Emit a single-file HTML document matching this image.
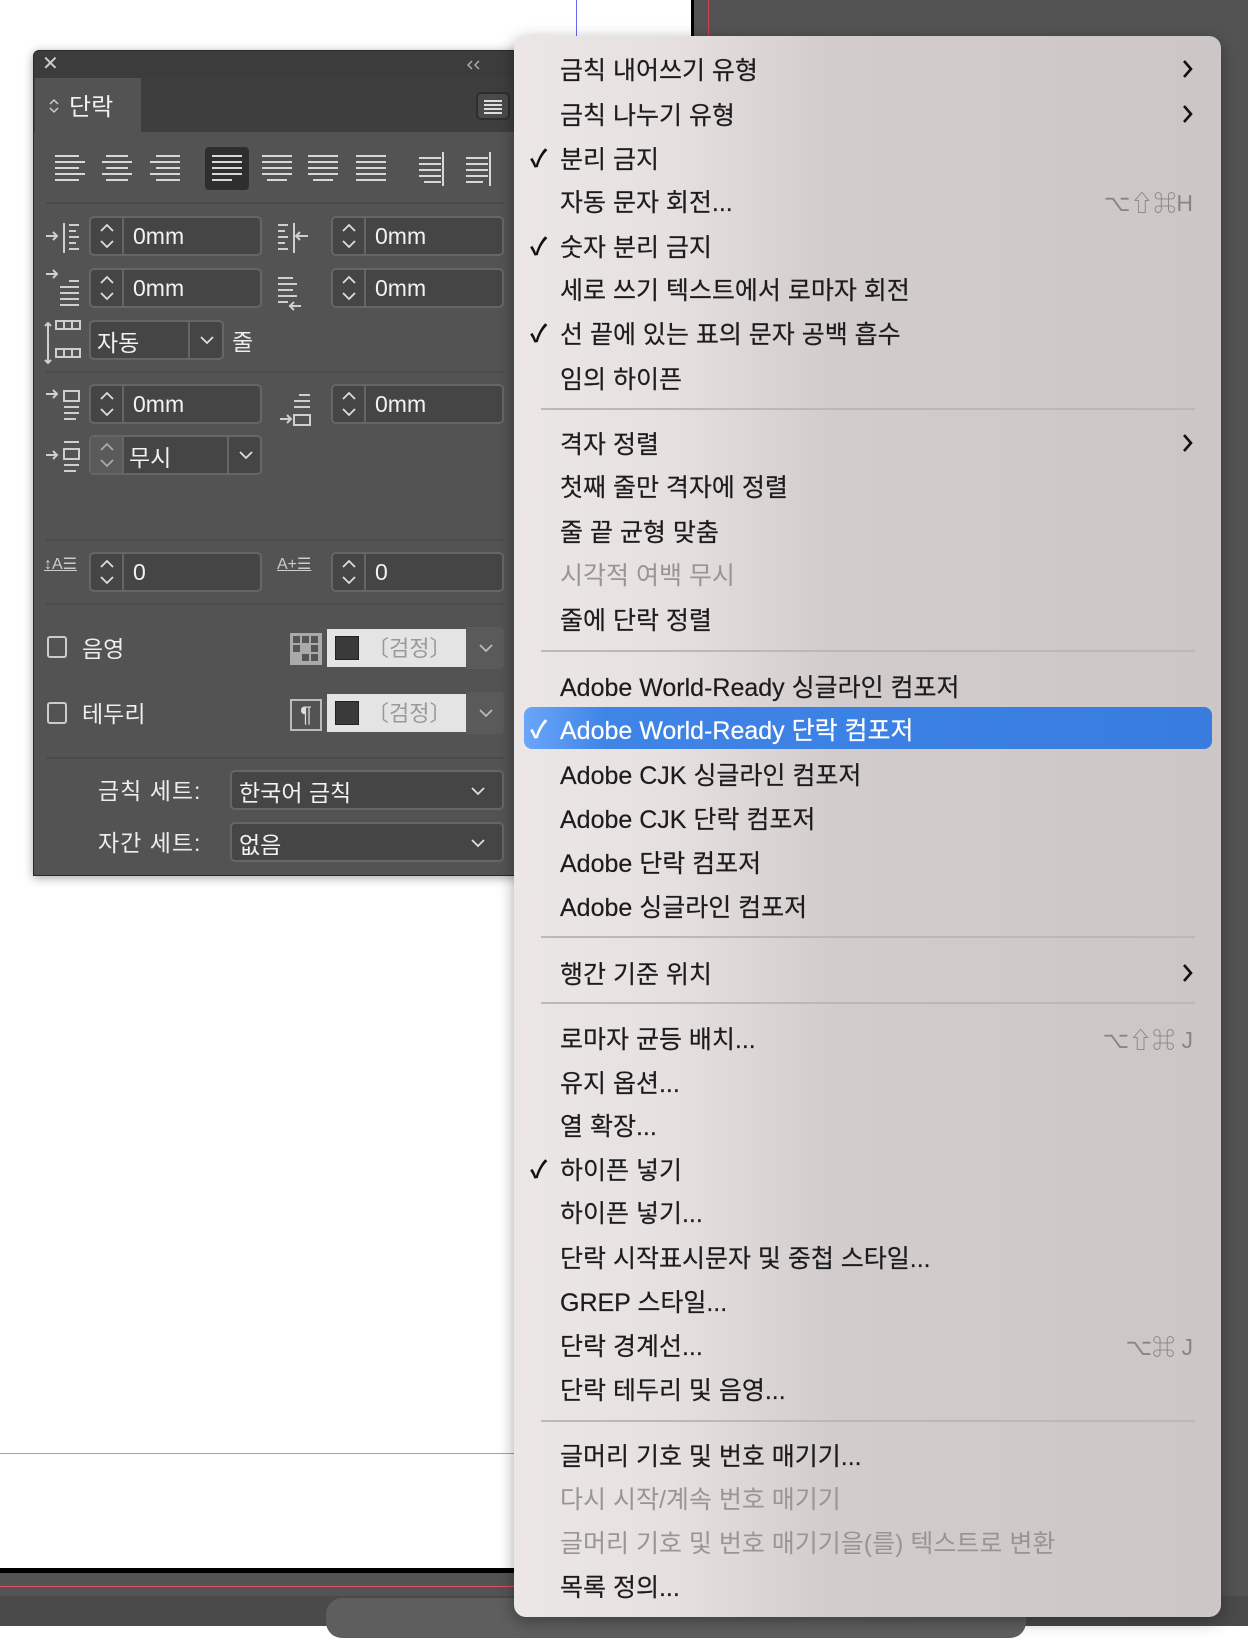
<!DOCTYPE html>
<html><head><meta charset="utf-8"><style>
*{margin:0;padding:0;box-sizing:border-box}
body{width:1248px;height:1626px;position:relative;overflow:hidden;background:#fff;font-family:"Liberation Sans","Noto Sans CJK KR",sans-serif}
.a{position:absolute}
.panel{left:33px;top:50px;width:490px;height:826px;background:#535353;border:1px solid #2a2a2a;border-radius:6px 0 0 0;box-shadow:0 2px 10px rgba(0,0,0,.35);color:#eee}
.inp{position:absolute;background:#454545;border:2px solid #666;border-radius:5px;height:40px}
.spin{position:absolute;left:0;top:0;width:33px;height:36px;border-right:2px solid #666}
.spin svg{position:absolute;left:6px;top:4px}
.val{position:absolute;left:42px;top:5px;font-size:23px;color:#f2f2f2}
.lbl{position:absolute;font-size:23px;color:#eee}
.sep{position:absolute;left:12px;width:458px;height:2px;background:#4a4a4a}
.menu{left:514px;top:36px;width:707px;height:1581px;border-radius:12px;background:linear-gradient(90deg,#ece7e7 0%,#e6e0e0 22%,#d2cccc 45%,#ccc6c6 100%);box-shadow:0 4px 16px rgba(0,0,0,.35)}
.it{position:absolute;left:46px;font-size:25px;color:#1c1c1c;line-height:30px;white-space:nowrap;-webkit-text-stroke:0.2px #1c1c1c;margin-top:3px}
.dis{color:#9a9595;-webkit-text-stroke:0}
.ck{position:absolute;left:16px;font-size:24px;font-weight:bold;color:#111;line-height:30px;margin-top:3px}
.sc{position:absolute;right:28px;font-size:23px;color:#8a8585;line-height:30px;margin-top:3px}
.ms{position:absolute;left:27px;width:654px;height:2px;background:#bdb7b7}
</style></head><body>
<div class="a" style="left:576px;top:0;width:1px;height:40px;background:#6a6af0"></div>
<div class="a" style="left:691px;top:0;width:3px;height:40px;background:#000"></div>
<div class="a" style="left:694px;top:0;width:554px;height:1626px;background:#535353"></div>
<div class="a" style="left:708px;top:0;width:1px;height:40px;background:#d04050"></div>
<div class="a" style="left:0;top:1453px;width:694px;height:1px;background:#c88cb8"></div>
<div class="a" style="left:0;top:1568px;width:694px;height:5px;background:#000"></div>
<div class="a" style="left:0;top:1573px;width:1248px;height:53px;background:#535353"></div>
<div class="a" style="left:0;top:1586px;width:700px;height:1px;background:#e05060"></div>
<div class="a" style="left:0;top:1596px;width:1248px;height:30px;background:#4a4a4a"></div>
<div class="a" style="left:326px;top:1598px;width:700px;height:40px;border-radius:16px;background:#5e5e5e"></div>

<div class="a panel">
 <div class="a" style="left:0;top:0;width:488px;height:27px;background:#3c3c3c;border-radius:5px 0 0 0"></div>
 <div class="a" style="left:8px;top:0;font-size:20px;color:#ccc">✕</div>
 <svg class="a" style="left:430px;top:7px" width="20" height="14"><path d="M8 3l-4 4 4 4M15 3l-4 4 4 4" stroke="#aaa" stroke-width="1.5" fill="none"/></svg>
 <div class="a" style="left:0;top:27px;width:488px;height:54px;background:#3e3e3e"></div>
 <div class="a" style="left:1px;top:27px;width:106px;height:55px;background:#535353"></div>
 <svg class="a" style="left:14px;top:45px" width="12" height="20"><path d="M2 8l4-4 4 4M2 12l4 4 4-4" stroke="#ccc" stroke-width="1.5" fill="none"/></svg>
 <div class="a" style="left:35px;top:36px;font-size:24px;color:#f2f2f2">단락</div>
 <div class="a" style="left:442px;top:41px;width:34px;height:28px;border:2px solid #2e2e2e;border-radius:5px;background:#4a4a4a">
  <svg width="30" height="24" style="position:absolute;left:0;top:0"><g stroke="#ddd" stroke-width="2"><line x1="6" y1="7" x2="24" y2="7"/><line x1="6" y1="11" x2="24" y2="11"/><line x1="6" y1="15" x2="24" y2="15"/><line x1="6" y1="19" x2="24" y2="19"/></g></svg>
 </div>
 <div class="a" style="left:171px;top:96px;width:44px;height:43px;background:#2e2e2e;border-radius:4px"></div>
 <svg class="a" style="left:0;top:96px" width="488" height="44"><g stroke="#d8d8d8" stroke-width="2">
  <path d="M21 9h24M21 15h30M21 21h24M21 27h30M21 33h24"/>
  <path d="M72 9h22M68 15h30M72 21h22M68 27h30M72 33h22"/>
  <path d="M122 9h24M116 15h30M122 21h24M116 27h30M122 33h24"/>
  <path d="M178 9h30M178 15h30M178 21h30M178 27h30M178 33h20"/>
  <path d="M228 9h30M228 15h30M228 21h30M228 27h30M233 33h20"/>
  <path d="M274 9h30M274 15h30M274 21h30M274 27h30M279 33h20"/>
  <path d="M322 9h30M322 15h30M322 21h30M322 27h30M322 33h30"/>
  <path d="M385 11h22M385 17h22M385 23h22M385 29h22M390 35h17M409 5v34"/>
  <path d="M432 11h22M432 17h22M432 23h22M432 29h22M432 35h17M456 5v34"/>
 </g></svg>
 <div class="sep" style="top:151px"></div>
 <svg class="a" style="left:10px;top:160px" width="470" height="360"><g stroke="#cfcfcf" stroke-width="2" fill="none">
  <path d="M2 25h10M9 21l4 4-4 4M20 12v30M25 14h10M25 20h7M25 26h10M25 32h7M25 38h10"/>
  <path d="M234 14h10M234 20h7M234 26h10M234 32h7M234 38h10M250 12v30M252 25h12M256 21l-4 4 4 4"/>
  <path d="M2 63h10M9 59l4 4-4 4M25 70h10M16 76h19M16 82h19M16 88h19M16 94h19"/>
  <path d="M234 67h15M234 73h19M234 79h15M234 85h19M234 91h10M245 95h12M250 91l-4 4 4 4"/>
  <path d="M4 112v40M1 115l3-3 3 3M1 149l3 3 3-3M12 110h24v8H12zM12 138h24v8H12zM20 110v8M28 110v8M20 138v8M28 138v8"/>
  <path d="M2 183h10M9 179l4 4-4 4M20 180h15v10H20zM20 196h15M20 202h15M20 208h12"/>
  <path d="M236 208h10M243 204l4 4-4 4M250 204h16v10H250zM250 190h16M250 196h16M255 184h11"/>
  <path d="M2 244h10M9 240l4 4-4 4M20 238h15v10H20zM20 231h15M20 254h15M20 260h12"/>
 </g></svg>
 <div class="inp" style="left:55px;top:165px;width:173px"><div class="spin"><svg width="20" height="28"><path d="M4 9l6-6 6 6M4 19l6 6 6-6" stroke="#ddd" stroke-width="1.8" fill="none"/></svg></div><div class="val">0mm</div></div>
 <div class="inp" style="left:297px;top:165px;width:173px"><div class="spin"><svg width="20" height="28"><path d="M4 9l6-6 6 6M4 19l6 6 6-6" stroke="#ddd" stroke-width="1.8" fill="none"/></svg></div><div class="val">0mm</div></div>
 <div class="inp" style="left:55px;top:217px;width:173px"><div class="spin"><svg width="20" height="28"><path d="M4 9l6-6 6 6M4 19l6 6 6-6" stroke="#ddd" stroke-width="1.8" fill="none"/></svg></div><div class="val">0mm</div></div>
 <div class="inp" style="left:297px;top:217px;width:173px"><div class="spin"><svg width="20" height="28"><path d="M4 9l6-6 6 6M4 19l6 6 6-6" stroke="#ddd" stroke-width="1.8" fill="none"/></svg></div><div class="val">0mm</div></div>
 <div class="inp" style="left:55px;top:269px;width:135px"><div class="val" style="left:6px;top:2px">자동</div><div class="a" style="left:97px;top:0;width:2px;height:36px;background:#666"></div><svg class="a" style="left:106px;top:10px" width="20" height="16"><path d="M4 5l6 6 6-6" stroke="#ddd" stroke-width="1.8" fill="none"/></svg></div>
 <div class="lbl" style="left:198px;top:272px">줄</div>
 <div class="sep" style="top:320px"></div>
 <div class="inp" style="left:55px;top:333px;width:173px"><div class="spin"><svg width="20" height="28"><path d="M4 9l6-6 6 6M4 19l6 6 6-6" stroke="#ddd" stroke-width="1.8" fill="none"/></svg></div><div class="val">0mm</div></div>
 <div class="inp" style="left:297px;top:333px;width:173px"><div class="spin"><svg width="20" height="28"><path d="M4 9l6-6 6 6M4 19l6 6 6-6" stroke="#ddd" stroke-width="1.8" fill="none"/></svg></div><div class="val">0mm</div></div>
 <div class="inp" style="left:55px;top:384px;width:173px"><div class="spin" style="background:#5a5a5a"><svg width="20" height="28"><path d="M4 9l6-6 6 6M4 19l6 6 6-6" stroke="#aaa" stroke-width="1.8" fill="none"/></svg></div><div class="val" style="left:38px;top:2px">무시</div><div class="a" style="left:136px;top:0;width:2px;height:36px;background:#666"></div><svg class="a" style="left:145px;top:10px" width="20" height="16"><path d="M4 5l6 6 6-6" stroke="#ddd" stroke-width="1.8" fill="none"/></svg></div>
 <div class="sep" style="top:488px"></div>
 <div class="a" style="left:10px;top:503px;font-size:16px;color:#ccc;text-decoration:underline">↕A☰</div>
 <div class="a" style="left:243px;top:503px;font-size:16px;color:#ccc;text-decoration:underline">A+☰</div>
 <div class="inp" style="left:55px;top:501px;width:173px"><div class="spin"><svg width="20" height="28"><path d="M4 9l6-6 6 6M4 19l6 6 6-6" stroke="#ddd" stroke-width="1.8" fill="none"/></svg></div><div class="val">0</div></div>
 <div class="inp" style="left:297px;top:501px;width:173px"><div class="spin"><svg width="20" height="28"><path d="M4 9l6-6 6 6M4 19l6 6 6-6" stroke="#ddd" stroke-width="1.8" fill="none"/></svg></div><div class="val">0</div></div>
 <div class="sep" style="top:552px"></div>
 <div class="a" style="left:13px;top:585px;width:20px;height:22px;border:2px solid #ccc;border-radius:3px"></div>
 <div class="lbl" style="left:48px;top:579px">음영</div>
 <svg class="a" style="left:256px;top:582px" width="32" height="32"><rect width="32" height="32" fill="#aaa"/><g fill="#555"><rect x="3" y="3" width="7" height="7"/><rect x="12" y="3" width="7" height="7"/><rect x="21" y="3" width="7" height="7"/><rect x="3" y="12" width="7" height="7"/><rect x="21" y="12" width="7" height="7"/><rect x="12" y="21" width="7" height="7"/><rect x="21" y="21" width="7" height="7"/></g></svg>
 <div class="a" style="left:293px;top:578px;width:139px;height:38px;background:#e4e4e4"></div>
 <div class="a" style="left:432px;top:576px;width:38px;height:42px;background:#5a5a5a;border-radius:0 4px 4px 0"></div>
 <div class="a" style="left:301px;top:585px;width:24px;height:24px;background:#3a3a3a;border:1px solid #222"></div>
 <div class="a" style="left:333px;top:580px;font-size:22px;color:#999">〔검정〕</div>
 <svg class="a" style="left:442px;top:589px" width="20" height="16"><path d="M4 5l6 6 6-6" stroke="#bbb" stroke-width="1.8" fill="none"/></svg>
 <div class="a" style="left:13px;top:651px;width:20px;height:22px;border:2px solid #ccc;border-radius:3px"></div>
 <div class="lbl" style="left:48px;top:644px">테두리</div>
 <div class="a" style="left:256px;top:648px;width:32px;height:32px;border:2px solid #bbb;color:#ddd;font-size:22px;text-align:center;line-height:28px">¶</div>
 <div class="a" style="left:293px;top:643px;width:139px;height:38px;background:#e4e4e4"></div>
 <div class="a" style="left:432px;top:641px;width:38px;height:42px;background:#5a5a5a;border-radius:0 4px 4px 0"></div>
 <div class="a" style="left:301px;top:650px;width:24px;height:24px;background:#3a3a3a;border:1px solid #222"></div>
 <div class="a" style="left:333px;top:645px;font-size:22px;color:#999">〔검정〕</div>
 <svg class="a" style="left:442px;top:654px" width="20" height="16"><path d="M4 5l6 6 6-6" stroke="#bbb" stroke-width="1.8" fill="none"/></svg>
 <div class="sep" style="top:706px"></div>
 <div class="lbl" style="left:64px;top:721px;letter-spacing:1px">금칙 세트:</div>
 <div class="inp" style="left:196px;top:719px;width:274px"><div class="val" style="left:7px;top:2px">한국어 금칙</div><svg class="a" style="left:236px;top:11px" width="20" height="16"><path d="M4 5l6 6 6-6" stroke="#ddd" stroke-width="1.8" fill="none"/></svg></div>
 <div class="lbl" style="left:64px;top:773px;letter-spacing:1px">자간 세트:</div>
 <div class="inp" style="left:196px;top:771px;width:274px"><div class="val" style="left:7px;top:2px">없음</div><svg class="a" style="left:236px;top:11px" width="20" height="16"><path d="M4 5l6 6 6-6" stroke="#ddd" stroke-width="1.8" fill="none"/></svg></div>
</div>

<div class="a menu">
 <svg class="a" style="left:0;top:0" width="707" height="1581"><g stroke="#111" stroke-width="2.6" fill="none"><path d="M670 25l7 8-7 8M670 70l7 8-7 8M670 399l7 8-7 8M670 929l7 8-7 8"/></g></svg>
 <div class="it" style="top:17px">금칙 내어쓰기 유형</div>
 <div class="it" style="top:62px">금칙 나누기 유형</div>
 <div class="ck" style="top:106px">✓</div><div class="it" style="top:106px">분리 금지</div>
 <div class="it" style="top:149px">자동 문자 회전...</div><div class="sc" style="top:149px">⌥⇧⌘H</div>
 <div class="ck" style="top:194px">✓</div><div class="it" style="top:194px">숫자 분리 금지</div>
 <div class="it" style="top:237px">세로 쓰기 텍스트에서 로마자 회전</div>
 <div class="ck" style="top:281px">✓</div><div class="it" style="top:281px">선 끝에 있는 표의 문자 공백 흡수</div>
 <div class="it" style="top:326px">임의 하이픈</div>
 <div class="ms" style="top:372px"></div>
 <div class="it" style="top:391px">격자 정렬</div>
 <div class="it" style="top:434px">첫째 줄만 격자에 정렬</div>
 <div class="it" style="top:479px">줄 끝 균형 맞춤</div>
 <div class="it dis" style="top:522px">시각적 여백 무시</div>
 <div class="it" style="top:567px">줄에 단락 정렬</div>
 <div class="ms" style="top:614px"></div>
 <div class="it" style="top:634px">Adobe World-Ready 싱글라인 컴포저</div>
 <div class="a" style="left:10px;top:671px;width:688px;height:42px;border-radius:8px;background:linear-gradient(90deg,#6aa6fa 0%,#3f84e6 12%,#387ce0 100%)"></div>
 <div class="ck" style="top:677px;color:#fff">✓</div><div class="it" style="top:677px;color:#fff;-webkit-text-stroke:0.2px #fff">Adobe World-Ready 단락 컴포저</div>
 <div class="it" style="top:722px">Adobe CJK 싱글라인 컴포저</div>
 <div class="it" style="top:766px">Adobe CJK 단락 컴포저</div>
 <div class="it" style="top:810px">Adobe 단락 컴포저</div>
 <div class="it" style="top:854px">Adobe 싱글라인 컴포저</div>
 <div class="ms" style="top:900px"></div>
 <div class="it" style="top:921px">행간 기준 위치</div>
 <div class="ms" style="top:966px"></div>
 <div class="it" style="top:986px">로마자 균등 배치...</div><div class="sc" style="top:986px">⌥⇧⌘ J</div>
 <div class="it" style="top:1030px">유지 옵션...</div>
 <div class="it" style="top:1073px">열 확장...</div>
 <div class="ck" style="top:1117px">✓</div><div class="it" style="top:1117px">하이픈 넣기</div>
 <div class="it" style="top:1160px">하이픈 넣기...</div>
 <div class="it" style="top:1205px">단락 시작표시문자 및 중첩 스타일...</div>
 <div class="it" style="top:1249px">GREP 스타일...</div>
 <div class="it" style="top:1293px">단락 경계선...</div><div class="sc" style="top:1293px">⌥⌘ J</div>
 <div class="it" style="top:1337px">단락 테두리 및 음영...</div>
 <div class="ms" style="top:1384px"></div>
 <div class="it" style="top:1403px">글머리 기호 및 번호 매기기...</div>
 <div class="it dis" style="top:1446px">다시 시작/계속 번호 매기기</div>
 <div class="it dis" style="top:1490px">글머리 기호 및 번호 매기기을(를) 텍스트로 변환</div>
 <div class="it" style="top:1534px">목록 정의...</div>
</div>
</body></html>
